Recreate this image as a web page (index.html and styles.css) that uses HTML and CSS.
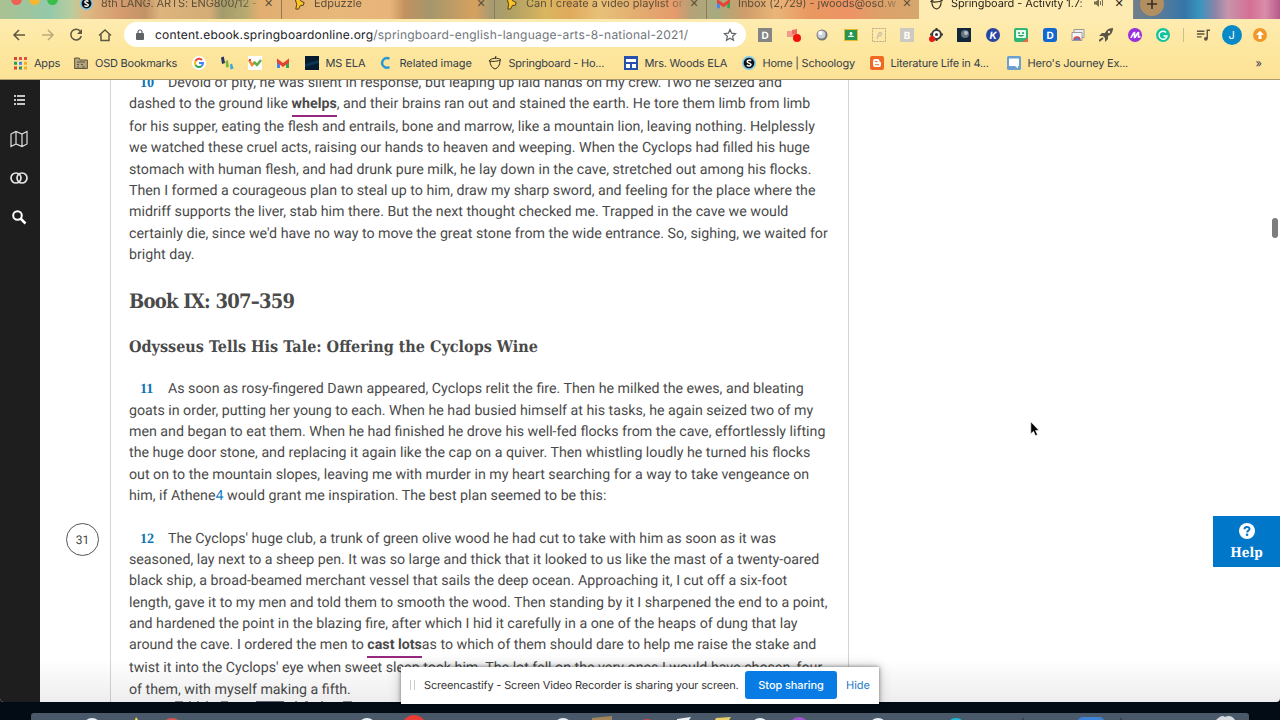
FILE: index.html
```html
<!DOCTYPE html>
<html lang="en">
<head>
  <meta charset="UTF-8">
  <title>Springboard - Activity 1.7</title>
  <link rel="stylesheet" href="styles.css">
</head>
<body>
  <!-- TABS -->
  <div class="tabstrip">
    <div class="lights"><i class="red"></i><i class="yellow"></i><i class="green"></i></div>
    <div class="tab t1">
      <svg class="fav" viewBox="0 0 14 14"><circle cx="7" cy="7" r="7" fill="#7cc8e8"/><circle cx="7" cy="7" r="5.3" fill="#111"/><path d="M9 5C8 3.5 5 4 5.2 5.6S9 7 9 8.6 6 10.5 4.8 9" fill="none" stroke="#fff" stroke-width="1.5"/></svg>
      <span class="title">8th LANG. ARTS: ENG800/12 -</span><span class="close">✕</span>
    </div>
    <div class="tab t2">
      <svg class="fav" viewBox="0 0 14 14"><path d="M2 1h5l1 3 4 2-1 3-3 0-2 4-3 0 1-5z" fill="#fcc525" stroke="#49381c"/></svg>
      <span class="title">Edpuzzle</span><span class="close">✕</span>
    </div>
    <div class="tab t3">
      <svg class="fav" viewBox="0 0 14 14"><path d="M2 1h5l1 3 4 2-1 3-3 0-2 4-3 0 1-5z" fill="#fcc525" stroke="#49381c"/></svg>
      <span class="title">Can I create a video playlist or</span><span class="close">✕</span>
    </div>
    <div class="tab t4">
      <svg class="fav" viewBox="0 0 14 14"><path d="M0 2v10h3V6z" fill="#4285f4"/><path d="M14 2v10h-3V6z" fill="#34a853"/><path d="M0 2l7 5 7-5v4L7 11 0 6z" fill="#ea4335"/></svg>
      <span class="title">Inbox (2,729) - jwoods@osd.w</span><span class="close">✕</span>
    </div>
    <div class="tab t5 active">
      <svg class="fav" viewBox="0 0 14 14"><path d="M2 5c0 4 2 7 5 8 3-1 5-4 5-8M1 5c2-3 9-4 12-1-3 1-8 2-12 1zM7 3L8 0" fill="none" stroke="#332d20" stroke-width="1.2"/></svg>
      <span class="title">Springboard - Activity 1.7:</span>
      <svg class="speaker" viewBox="0 0 10 10"><path d="M0 3.5h2L5 1v8L2 6.5H0z" fill="#766c52"/><path d="M6.5 3v4M8.5 2v6" stroke="#766c52"/></svg>
      <span class="close">✕</span>
    </div>
    <div class="newtab"><svg viewBox="0 0 12 12"><path d="M6 1v10M1 6h10" stroke="#382d20" stroke-width="1.6"/></svg></div>
  </div>

  <!-- ADDRESS BAR -->
  <div class="toolbar">
    <div class="nav">
      <svg viewBox="0 0 14 14"><path d="M13 7H2M7 2L2 7l5 5"/></svg>
      <svg class="off" viewBox="0 0 14 14"><path d="M1 7h11M7 2l5 5-5 5"/></svg>
      <svg viewBox="0 0 14 14"><path d="M11.5 3.5A5.3 5.3 0 1 0 12.3 8"/><path d="M13 1v5H8z" fill="#5f5840" stroke="none"/></svg>
      <svg viewBox="0 0 14 14"><path d="M1 7.5L7 2l6 5.5M3 6.5V12.500h8V6.500"/></svg>
    </div>
    <div class="omnibox">
      <svg class="lock" viewBox="0 0 8 11"><rect y="4" width="8" height="7" rx="1" fill="#5f6368"/><path d="M2 5V3a2 2 0 0 1 4 0v2" fill="none" stroke="#5f6368" stroke-width="1.2"/></svg>
      <span class="url"><b>content.ebook.springboardonline.org</b>/springboard-english-language-arts-8-national-2021/</span>
      <svg class="star" viewBox="0 0 14 14"><path d="M7 1.500l1.600 3.700 4 .4-3 2.700.9 4L7 10.200l-3.500 2.100.9-4-3-2.700 4-.4z" fill="none" stroke="#5f6368" stroke-width="1.2"/></svg>
    </div>
    <div class="extensions">
      <svg viewBox="0 0 14 14"><rect width="14" height="14" fill="#858585"/><text x="7" y="10.500" class="glyph">D</text></svg>
      <svg viewBox="0 0 14 14"><path d="M0 3h8v6H0z" fill="#f49a8b"/><path d="M5 2l5-1v5H5z" fill="#ee6a62"/><circle cx="10" cy="10" r="4" fill="#f0100c"/></svg>
      <svg viewBox="0 0 14 14"><circle cx="7" cy="7" r="5.500" fill="#777"/><circle cx="6.500" cy="6.500" r="4" fill="#ccd0da"/><circle cx="5.500" cy="5" r="2" fill="#fff"/></svg>
      <svg viewBox="0 0 14 14"><path d="M0 1h14v12H0z" fill="#e8b92c"/><path d="M1 2h12v10H1z" fill="#249655"/><circle cx="7" cy="5.500" r="1.400" fill="#fff"/><path d="M4 9c0-2 6-2 6 0z" fill="#fff"/></svg>
      <svg viewBox="0 0 14 14"><rect x=".5" y=".5" width="13" height="13" fill="none" stroke="#b5a986" stroke-dasharray="2 1"/><path d="M5 11l2-6c3-2 4 3 0 3" fill="none" stroke="#c9c0a5" stroke-width="1.300"/></svg>
      <svg viewBox="0 0 14 14"><rect width="14" height="14" fill="#ccc9c0"/><text x="7" y="11" class="glyph">B</text></svg>
      <svg viewBox="0 0 14 14"><circle cx="7.500" cy="6.500" r="4.400" fill="#fff" stroke="#3c3a39" stroke-width="2"/><path d="M7.500 0v3m0 7v3M1 6.500h3m7 0h3" stroke="#3c3a39" stroke-width="2"/><circle cx="7.500" cy="6.500" r="1.500" fill="#333"/><circle cx="3" cy="11" r="3" fill="#ed1711"/></svg>
      <svg viewBox="0 0 14 14"><rect width="14" height="14" fill="#11263b"/><circle cx="8" cy="6" r="4" fill="#667482"/><circle cx="9" cy="5" r="2" fill="#b8bec6"/></svg>
      <svg viewBox="0 0 14 14"><circle cx="7" cy="7" r="7" fill="#2845a2"/><text x="7" y="10.500" class="glyph italic">K</text></svg>
      <svg viewBox="0 0 14 14"><rect width="14" height="14" rx="2" fill="#31b574"/><rect x="2" y="2" width="10" height="8" rx="1" fill="#e8fff0"/><circle cx="5" cy="5" r="1" fill="#299b64"/><circle cx="9" cy="5" r="1" fill="#299b64"/><path d="M4 7h6c-1 2-5 2-6 0z" fill="#299b64"/><path d="M8 14l6-4v4z" fill="#f26644"/></svg>
      <svg viewBox="0 0 14 14"><rect width="14" height="14" rx="3" fill="#1266cf"/><text x="7" y="11" class="glyph">D</text></svg>
      <svg viewBox="0 0 14 14"><path d="M3 1.500h10v8H3z" fill="#eee" stroke="#999"/><path d="M1 4.500h10v8H1z" fill="#f7f7f7" stroke="#999"/><path d="M3 12a3 3 0 0 1 6 0z" fill="#4686e8"/><path d="M3 12a3 3 0 0 1 6 0" fill="none" stroke="#dd4638" stroke-width="1.500"/></svg>
      <svg viewBox="0 0 14 14"><path d="M14 0c-5 0-7 3-8 5H3L0 8l4 0 2 2v4l3-3V8c3-1 5-4 5-8z" fill="#5b5548"/><circle cx="10" cy="4" r="1.200" fill="#fde6a0"/><path d="M4 10l-4 3" stroke="#5b5548" stroke-width="2"/></svg>
      <svg viewBox="0 0 14 14"><circle cx="7" cy="7" r="7" fill="#982fdb"/><path d="M2.500 9.500c2 0 2-5 4-5v5c2 0 2-5 4-5v4.500h2" fill="none" stroke="#fff" stroke-width="1.700"/></svg>
      <svg viewBox="0 0 14 14"><circle cx="7" cy="7" r="7" fill="#15c39a"/><path d="M10 4.500A4 4 0 1 0 11 8H7.500" fill="none" stroke="#fff" stroke-width="1.400"/></svg>
    </div>
    <div class="divider"></div>
    <svg class="queue" viewBox="0 0 16 14"><path d="M1 3h8M1 6h8M1 9h5M12 11V2h3" fill="none" stroke="#5c5540" stroke-width="1.500"/><circle cx="10.500" cy="11" r="2" fill="#5c5540"/></svg>
    <div class="avatar">J</div>
    <svg class="update" viewBox="0 0 14 14"><circle cx="7" cy="7" r="7" fill="#ef9828"/><path d="M7 2.800l4 4H8.500V11h-3V6.800H3z" fill="#fff"/></svg>
  </div>

  <!-- BOOKMARKS -->
  <div class="bookmarks">
    <div class="bm b1"><svg viewBox="0 0 14 14"><path d="M1 2.500h3M1 12h3" stroke="#dc4437" stroke-width="3"/><path d="M1 7.300h3M6 12h3" stroke="#299957" stroke-width="3"/><path d="M6 2.500h3M11 2.500h3" stroke="#e25241" stroke-width="3"/><path d="M6 7.300h3" stroke="#4285f4" stroke-width="3"/><path d="M11 7.300h3M11 12h3" stroke="#f2ae26" stroke-width="3"/></svg>Apps</div>
    <div class="bm b2"><svg viewBox="0 0 14 14"><path d="M.6 2h4.500l1 2h7.300v8.500H.600z" fill="#b3a57d" stroke="#5f573d"/><path d="M3 6h8M3 8.500h2m2 0h2M3 11h2m3 0h3" stroke="#5f573d" stroke-width="1.200"/></svg>OSD Bookmarks</div>
    <div class="bm b3"><svg viewBox="0 0 14 14"><circle cx="7" cy="7" r="7" fill="#fff"/><g fill="none" stroke-width="2"><path d="M10 4A4 4 0 0 0 3.500 5" stroke="#ea4335"/><path d="M3.500 5a4 4 0 0 0 0 4" stroke="#fbbc05"/><path d="M3.500 9A4 4 0 0 0 9.700 10" stroke="#34a853"/><path d="M9.700 10A4 4 0 0 0 11 7H7" stroke="#4285f4"/></g></svg></div>
    <div class="bm b4"><svg viewBox="0 0 14 14"><path d="M1 1.500L3.800.5 5 7 2 8z" fill="#293360"/><path d="M5.500 5L8 4l1 7-3 .5z" fill="#7fb93c"/><path d="M10 8.500l2-1 1.500 5-3 1z" fill="#3fa8d7"/></svg></div>
    <div class="bm b5"><svg viewBox="0 0 14 14"><path fill="#fff" d="M0 0h14v14H0z"/><path d="M1 4l3 5 3-3" fill="none" stroke="#ee8a35" stroke-width="2.500"/><path d="M6 6l3 3 4-5" fill="none" stroke="#5dae4a" stroke-width="2.500"/><path d="M1 4h2" stroke="#dc4638" stroke-width="2"/></svg></div>
    <div class="bm b6"><svg viewBox="0 0 14 14"><path d="M1 2.500v9.500h3V6z" fill="#4285f4"/><path d="M13 2.500v9.500h-3V6z" fill="#34a853"/><path d="M1 2.500l6 4.500 6-4.500v4L7 11 1 6.500z" fill="#e54235"/></svg></div>
    <div class="bm b7"><svg viewBox="0 0 14 14"><path fill="#061a30" d="M0 0h14v14H0z"/><path d="M0 8l14-4v3L0 11z" fill="#0b3558"/></svg>MS ELA</div>
    <div class="bm b8"><svg viewBox="0 0 14 14"><path d="M10.500 2.800A4.800 4.800 0 1 0 10.500 11" fill="none" stroke="#2999d3" stroke-width="2.400"/></svg>Related image</div>
    <div class="bm b9"><svg viewBox="0 0 14 14"><path d="M2 5c0 4 2 7 5 8 3-1 5-4 5-8M1 5c2-3 9-4 12-1-3 1-8 2-12 1zM7 3L8 0" fill="none" stroke="#332d20"/></svg>Springboard - Ho...</div>
    <div class="bm b10"><svg viewBox="0 0 14 14"><path fill="#2750ad" d="M0 0h14v14H0z"/><path d="M2 3h10v3H2zM2 8h4v4H2zM8 8h4v4H8z" fill="#fff"/></svg>Mrs. Woods ELA</div>
    <div class="bm b11"><svg viewBox="0 0 14 14"><circle cx="7" cy="7" r="7" fill="#7cc8e8"/><circle cx="7" cy="7" r="5.300" fill="#111"/><path d="M9 5C8 3.500 5 4 5.200 5.600S9 7 9 8.600 6 10.500 4.800 9" fill="none" stroke="#fff" stroke-width="1.500"/></svg>Home | Schoology</div>
    <div class="bm b12"><svg viewBox="0 0 14 14"><rect width="14" height="14" rx="2" fill="#ee6922"/><path d="M5 3h2.500a2 2 0 0 1 2 2c0 1 1.500.5 1.500 2v2a2 2 0 0 1-2 2H5a2 2 0 0 1-2-2V5a2 2 0 0 1 2-2z" fill="#fff"/><path d="M5 5.500h2.500M5 8.700h4" stroke="#ee6922" stroke-width="1.100"/></svg>Literature Life in 4...</div>
    <div class="bm b13"><svg viewBox="0 0 14 14"><rect width="14" height="14" rx="1.500" fill="#6b9fce"/><path d="M2 2.500h10v7.500h-1v2.500L8 10H2z" fill="#fff"/></svg>Hero's Journey Ex...</div>
    <div class="more">»</div>
  </div>

  <!-- READER -->
  <div class="reader">
    <div class="sidebar">
      <svg viewBox="0 0 18 18"><path d="M4 5h2M4 9h2M4 13h2M7 5h8M7 9h8M7 13h8" stroke="#fff" stroke-width="1.700"/></svg>
      <svg viewBox="0 0 18 18"><path d="M1 4l5-2.500 6 2.500 5-2.500v12.500L12 16.500 6 14l-5 2.500zM6 1.500V14M12 4v12.500" fill="none" stroke="#ddd" stroke-width="1.200"/></svg>
      <svg viewBox="0 0 18 18"><g fill="none" stroke="#e5e5e5" stroke-width="1.700"><circle cx="6" cy="9" r="5"/><circle cx="12" cy="9" r="5"/></g></svg>
      <svg viewBox="0 0 18 18"><circle cx="7.500" cy="7.500" r="4.300" fill="none" stroke="#fff" stroke-width="2"/><path d="M10.500 10.500l5 5" stroke="#fff" stroke-width="2.500"/></svg>
    </div>
    <div class="margin"><div class="pagenum">31</div></div>
    <div class="article">
      <p>
        <span class="line"><b class="num">10</b>Devoid of pity, he was silent in response, but leaping up laid hands on my crew. Two he seized and</span>
        <span class="line tall">dashed to the ground like <b class="term">whelps</b>, and their brains ran out and stained the earth. He tore them limb from limb</span>
        <span class="line">for his supper, eating the flesh and entrails, bone and marrow, like a mountain lion, leaving nothing. Helplessly</span>
        <span class="line">we watched these cruel acts, raising our hands to heaven and weeping. When the Cyclops had filled his huge</span>
        <span class="line">stomach with human flesh, and had drunk pure milk, he lay down in the cave, stretched out among his flocks.</span>
        <span class="line">Then I formed a courageous plan to steal up to him, draw my sharp sword, and feeling for the place where the</span>
        <span class="line">midriff supports the liver, stab him there. But the next thought checked me. Trapped in the cave we would</span>
        <span class="line">certainly die, since we'd have no way to move the great stone from the wide entrance. So, sighing, we waited for</span>
        <span class="line">bright day.</span>
      </p>
      <h2>Book IX: 307–359</h2>
      <h3>Odysseus Tells His Tale: Offering the Cyclops Wine</h3>
      <p>
        <span class="line"><b class="num">11</b>As soon as rosy-fingered Dawn appeared, Cyclops relit the fire. Then he milked the ewes, and bleating</span>
        <span class="line">goats in order, putting her young to each. When he had busied himself at his tasks, he again seized two of my</span>
        <span class="line">men and began to eat them. When he had finished he drove his well-fed flocks from the cave, effortlessly lifting</span>
        <span class="line">the huge door stone, and replacing it again like the cap on a quiver. Then whistling loudly he turned his flocks</span>
        <span class="line">out on to the mountain slopes, leaving me with murder in my heart searching for a way to take vengeance on</span>
        <span class="line">him, if Athene<a>4</a> would grant me inspiration. The best plan seemed to be this:</span>
      </p>
      <p>
        <span class="line"><b class="num">12</b>The Cyclops' huge club, a trunk of green olive wood he had cut to take with him as soon as it was</span>
        <span class="line">seasoned, lay next to a sheep pen. It was so large and thick that it looked to us like the mast of a twenty-oared</span>
        <span class="line">black ship, a broad-beamed merchant vessel that sails the deep ocean. Approaching it, I cut off a six-foot</span>
        <span class="line">length, gave it to my men and told them to smooth the wood. Then standing by it I sharpened the end to a point,</span>
        <span class="line">and hardened the point in the blazing fire, after which I hid it carefully in a one of the heaps of dung that lay</span>
        <span class="line tall">around the cave. I ordered the men to <b class="term">cast lots</b>as to which of them should dare to help me raise the stake and</span>
        <span class="line">twist it into the Cyclops' eye when sweet sleep took him. The lot fell on the very ones I would have chosen, four</span>
        <span class="line">of them, with myself making a fifth.</span>
      </p>
    </div>
    <div class="scrollbar"></div>
    <div class="help">
      <svg viewBox="0 0 16 16"><circle cx="8" cy="8" r="8" fill="#fff"/><path d="M5.500 6.200C5.600 3 10.700 3.300 10.500 6c-.1 1.700-2.300 1.600-2.300 3.400" fill="none" stroke="#0077c8" stroke-width="2"/><circle cx="8.100" cy="11.800" r="1.300" fill="#0077c8"/></svg>
      <span>Help</span>
    </div>
    <div class="shade"></div>
    <!-- top edge of the next paragraph -->
    <svg class="peek" viewBox="0 0 180 1"><path d="M0 .5h8M14 .5h2M22 .5h2M31 .5h2M46 .5h7M120 .5h2M130 .5h3M146 .5h2M168 .5h9" stroke="#888"/><path d="M81 .5h28" stroke="#667"/></svg>
  </div>

  <!-- DOCK -->
  <div class="desktop">
    <svg class="dock" viewBox="0 0 1218 7">
      <rect width="1218" height="12" rx="3" fill="#4a5969"/>
      <g fill="#e9f0f6"><circle cx="61" cy="14" r="9"/><circle cx="336" cy="14" r="9"/><circle cx="532" cy="14" r="9"/><circle cx="729" cy="14" r="9"/><circle cx="847" cy="14" r="9"/></g>
      <path d="M104 7l1-3 2 3z" fill="#f5e547"/>
      <circle cx="141" cy="16" r="11" fill="#d95350"/><circle cx="383" cy="14" r="12" fill="#ec3b35"/>
      <path d="M561 5l20-2v4h-20z" fill="#a38558"/><circle cx="616" cy="15" r="9" fill="#d8403c"/>
      <path d="M646 6l14-2-2 3h-12z" fill="#eef2f5"/><path d="M685 5l15-1-2 3h-14z" fill="#ebcf67"/>
      <circle cx="768" cy="14" r="10" fill="#a252ce"/><circle cx="925" cy="15" r="10" fill="#1cb8df"/>
      <rect x="1047" y="4" width="26" height="8" rx="5" fill="#3d83d8"/><path d="M1185 7q6-6 9-3 6-3 10 3z" fill="#d5dade"/>
      <path d="M992 5v2M1090 5v2" stroke="#202b38"/>
    </svg>
  </div>

  <!-- SCREEN SHARING NOTICE -->
  <div class="sharing">
    <span class="grip"></span>
    <span class="msg">Screencastify - Screen Video Recorder is sharing your screen.</span>
    <button>Stop sharing</button>
    <span class="hide">Hide</span>
  </div>

  <svg class="cursor" viewBox="0 0 10 16"><path d="M.8.800v12l2.700-2.500 2 4.400 2-.9-2-4.300h3.500z" fill="#000" stroke="#fff" stroke-width=".6"/></svg>
</body>
</html>
```

FILE: styles.css
```css
* {
  margin: 0;
  padding: 0;
  box-sizing: border-box;
}
body {
  width: 1280px;
  height: 720px;
  overflow: hidden;
  background: #030c15;
  font-family: Inter, sans-serif;
  text-rendering: geometricPrecision;
}
svg {
  display: block;
  flex: none;
}

/* TABS */
.tabstrip {
  display: flex;
  height: 19px;
  overflow: hidden;
  background: linear-gradient(90deg, #aac191 0, #94c9aa 50px, #b9cd9d 72px, #dfb982 85px, #d69c70 120px, #c29366 145px, #ddb47c 160px, #d3ac76 210px, #a39b6c 222px, #b7aa70 245px, #e1ae70 260px, #e8b77a 340px, #e9b47a 390px, #c1915f 405px, #a4976b 430px, #d6a15f 475px, #a49b72 492px, #b4a263 515px, #d9b65f 545px, #dfaa5d 570px, #e8c179 600px, #e3ae70 635px, #e59b6b 675px, #b7a176 690px, #a6ab80 715px, #cf9d69 745px, #e9b579 775px, #e99861 810px, #ee9366 850px, #dda16a 880px, #d5a76e 920px, #d5a76e 1130px, #727e89 1134px, #527a9d 1165px, #3476a8 1185px, #3995be 1200px, #8b84a7 1215px, #c795aa 1228px, #d56f94 1250px, #d98daa 1265px, #b7598b 1280px);
}
.lights {
  display: flex;
  flex: none;
  gap: 7px;
  width: 80px;
  padding-left: 11px;
  margin-top: -6px;
}
.lights i {
  width: 11px;
  height: 11px;
  border-radius: 50%;
}
.lights .red { background: #ee6253; }
.lights .yellow { background: #f5b72e; }
.lights .green { background: #38bf4b; }

.tab {
  display: flex;
  flex: none;
  align-items: center;
  height: 32px;
  margin-top: -13px;
  font-size: 11px;
  color: #5d4f38;
}
.tab .fav {
  width: 13px;
  height: 13px;
  margin-right: 8px;
}
.tab .title {
  flex: 1;
  white-space: nowrap;
  -webkit-mask-image: linear-gradient(90deg, #000 88%, rgba(0, 0, 0, 0.35));
}
.tab .close {
  width: 12px;
  margin: 0 8px 0 6px;
  text-align: center;
}
.t1 { width: 202px; }
.t2 { width: 213px; padding-left: 11px; }
.t3 { width: 212px; padding-left: 10px; }
.t4 { width: 212px; padding-left: 10px; }
.t1 .title { letter-spacing: -0.1px; }
.t4 .title { letter-spacing: -0.05px; }
.t1, .t2, .t3 { box-shadow: inset -1px 0 #8f7958; }
.tab.active {
  width: 214px;
  padding-left: 11px;
  background: #feebb1;
  color: #2a261d;
}
.active .title { letter-spacing: -0.1px; }
.active .speaker {
  width: 10px;
  height: 10px;
}
.active .close { margin: 0 8px 0 9px; }
.newtab {
  flex: none;
  width: 24px;
  height: 24px;
  padding: 6px;
  margin: -8px 0 0 7px;
  border-radius: 50%;
  background: #b28f60;
}
.newtab svg {
  width: 12px;
  height: 12px;
}

/* ADDRESS BAR */
.toolbar {
  display: flex;
  align-items: center;
  height: 31px;
  background: linear-gradient(#feebb0, #fde79f);
}
.nav {
  display: flex;
  gap: 14.5px;
  width: 124px;
  padding-left: 12px;
}
.nav svg {
  width: 14px;
  height: 14px;
  fill: none;
  stroke: #5f5840;
  stroke-width: 1.5;
}
.nav .off { stroke: #b8aa7c; }
.omnibox {
  display: flex;
  align-items: center;
  width: 622px;
  height: 25px;
  padding: 0 9px 0 12px;
  border-radius: 13px;
  background: #fff;
}
.lock {
  width: 8px;
  height: 11px;
  margin-right: 11px;
}
.url {
  flex: 1;
  color: #70757a;
  font-size: 12px;
  letter-spacing: 0.22px;
  white-space: nowrap;
}
.url b {
  color: #202124;
  font-weight: 400;
}
.star {
  width: 14px;
  height: 14px;
}
.extensions {
  display: grid;
  grid-template-columns: repeat(15, 28.45px);
  justify-items: center;
  margin-left: 5px;
}
.extensions svg {
  width: 14px;
  height: 14px;
}
.glyph {
  fill: #fff;
  font: 700 10px Inter, sans-serif;
  text-anchor: middle;
}
.glyph.italic { font-style: italic; }
.divider {
  width: 1px;
  height: 14px;
  margin: 0 12px 0 5px;
  background: #cfbd86;
}
.queue {
  width: 15px;
  height: 14px;
}
.avatar {
  width: 20px;
  height: 20px;
  margin: 0 11px;
  border-radius: 50%;
  background: #0989c6;
  color: #fff;
  font-size: 11px;
  line-height: 20px;
  text-align: center;
}
.update {
  width: 14px;
  height: 14px;
}

/* BOOKMARKS */
.bookmarks {
  display: flex;
  align-items: center;
  height: 30px;
  padding: 0 0 4px 13px;
  background: linear-gradient(#fde69f, #fde296);
  border-bottom: 1px solid #aa9c72;
  color: #34404a;
  font-size: 11px;
  letter-spacing: -0.22px;
}
.bm {
  display: flex;
  align-items: center;
  flex: none;
  gap: 7px;
  white-space: nowrap;
}
.bm svg {
  width: 14px;
  height: 14px;
}
.b1 { width: 61px; }
.b2 { width: 117.5px; }
.b3, .b4 { width: 28px; }
.b5, .b6 { width: 28.5px; }
.b7 { width: 74px; }
.b8 { width: 109px; }
.b9 { width: 136px; }
.b10 { width: 118px; }
.b11 { width: 128px; }
.b12 { width: 137px; }
.b13 { width: 249px; }
.b7, .b8 { letter-spacing: -0.1px; }

/* READER */
.reader {
  position: relative;
  display: flex;
  height: 622px;
  overflow: hidden;
  background: #fff;
  border-radius: 0 0 4px 4px;
}
.sidebar {
  display: flex;
  flex-direction: column;
  align-items: center;
  gap: 21px;
  width: 40px;
  padding: 10.5px 2px 0 0;
  background: #1e1e1e;
}
.sidebar svg {
  width: 18px;
  height: 18px;
}
.margin {
  width: 70px;
  padding: 443px 0 0 26px;
}
.pagenum {
  width: 33px;
  height: 33px;
  border: 1px solid #555;
  border-radius: 50%;
  color: #444;
  font: 12px/32px Roboto, sans-serif;
  text-align: center;
}
.article {
  width: 739px;
  height: 640px;
  padding-left: 18px;
  border: solid #d4d4d4;
  border-width: 0 1px;
  color: #4a4a4a;
  font-family: Roboto, sans-serif;
  font-size: 14.21px;
}
.article p { margin-bottom: 21.5px; }
.article p:first-child { margin: -7.2px 0 0; }
.line {
  display: block;
  height: 21.33px;
  line-height: 21.33px;
  white-space: nowrap;
}
.line.tall { height: 23px; }
.num {
  display: inline-block;
  width: 39px;
  padding-left: 11px;
  color: #0e75b5;
  font-family: "Liberation Serif", serif;
}
.term {
  display: inline-block;
  height: 23px;
  border-bottom: 2px solid #96287f;
}
.article a { color: #1480c3; }
.article h2, .article h3 {
  font-family: "Roboto Slab", "DejaVu Serif Condensed", "DejaVu Serif", serif;
  white-space: nowrap;
}
.article h2 {
  margin-top: 19.5px;
  font-size: 20px;
  letter-spacing: -0.75px;
  line-height: 30px;
}
.article h3 {
  margin: 18px 0 19.4px;
  font-size: 16px;
  line-height: 26px;
}
.scrollbar {
  position: absolute;
  top: 138px;
  right: 2px;
  width: 6px;
  height: 20px;
  border-radius: 3px;
  background: #7d7d7d;
}
.help {
  position: absolute;
  top: 436px;
  right: 0;
  display: flex;
  flex-direction: column;
  align-items: center;
  gap: 5px;
  width: 67px;
  height: 51px;
  padding-top: 7px;
  background: #0077c8;
  color: #fff;
  font: bold 13.5px/18px "Roboto Slab", "DejaVu Serif Condensed", serif;
}
.help svg {
  width: 16px;
  height: 16px;
}
.shade {
  position: absolute;
  bottom: 0;
  left: 40px;
  right: 0;
  height: 42px;
  background: linear-gradient(transparent, rgba(0, 0, 0, 0.07));
}
.peek {
  position: absolute;
  bottom: 0;
  left: 175px;
  width: 180px;
  height: 1px;
}

/* DOCK */
.desktop {
  height: 18px;
  padding: 11px 0 0 31px;
}
.dock {
  width: 1218px;
  height: 7px;
}

/* SHARING NOTICE */
.sharing {
  position: absolute;
  left: 401px;
  top: 667px;
  display: flex;
  align-items: center;
  width: 478px;
  height: 37px;
  padding: 0 0 1px 9px;
  background: #fff;
  box-shadow: 0 0 4px rgba(0, 0, 0, 0.5), 0 0 14px rgba(0, 0, 0, 0.2);
  color: #333;
  font-size: 11px;
  white-space: nowrap;
}
.grip {
  width: 5px;
  height: 10px;
  margin-right: 9px;
  border: solid #ccc;
  border-width: 0 1px;
}
.msg {
  width: 321px;
  letter-spacing: -0.16px;
}
.sharing button {
  width: 92px;
  height: 28px;
  border: 0;
  border-radius: 3px;
  background: #087be5;
  color: #fff;
  font: 500 11px Inter, sans-serif;
  letter-spacing: -0.1px;
}
.hide {
  margin-left: 9px;
  color: #1b78c9;
}

.cursor {
  position: absolute;
  left: 1030px;
  top: 421px;
  width: 10px;
  height: 16px;
}
```
